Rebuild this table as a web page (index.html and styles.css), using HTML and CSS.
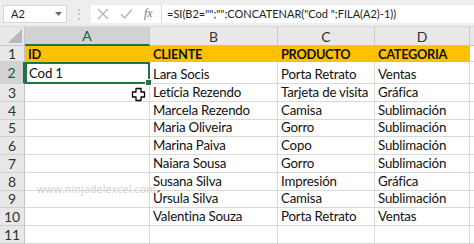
FILE: index.html
```html
<!DOCTYPE html>
<html>
<head>
<meta charset="utf-8">
<link rel="stylesheet" href="styles.css">
</head>
<body>
<div class="app">
  <div class="fbar">
    <div class="namebox"><span>A2</span><svg class="caret" width="7" height="4" viewBox="0 0 7 4"><path d="M0 0H7L3.5 4Z" fill="#6b6b6b"/></svg></div>
    <div class="dots">⋮</div>
    <div class="fbtns">
      <svg width="12" height="12" viewBox="0 0 12 12"><path d="M1 1L11 11M11 1L1 11" stroke="#b0b0b0" stroke-width="1.2" fill="none"/></svg>
      <svg width="13" height="12" viewBox="0 0 13 12"><path d="M1 6.5L4.5 10L12 1.5" stroke="#b0b0b0" stroke-width="1.2" fill="none"/></svg>
      <span class="fx">fx</span>
    </div>
    <div class="formula">=SI(B2="";"";CONCATENAR("Cod ";FILA(A2)-1))</div>
  </div>
  <div class="sheet">
    <div class="corner"><svg width="14" height="14" viewBox="0 0 14 14"><path d="M14 0V14H0Z" fill="#b8b8b8"/></svg></div>
    <div class="ch sel">A</div>
    <div class="ch">B</div>
    <div class="ch">C</div>
    <div class="ch">D</div>
    <div class="ch last"></div>

    <div class="rh">1</div>
    <div class="c hd">ID</div>
    <div class="c hd">CLIENTE</div>
    <div class="c hd">PRODUCTO</div>
    <div class="c hd">CATEGORIA</div>
    <div class="c"></div>

    <div class="rh rsel">2</div>
    <div class="c active">Cod 1</div>
    <div class="c">Lara Socis</div>
    <div class="c">Porta Retrato</div>
    <div class="c">Ventas</div>
    <div class="c"></div>

    <div class="rh">3</div>
    <div class="c"></div>
    <div class="c">Letícia Rezendo</div>
    <div class="c">Tarjeta de visita</div>
    <div class="c">Gráfica</div>
    <div class="c"></div>

    <div class="rh">4</div>
    <div class="c"></div>
    <div class="c">Marcela Rezendo</div>
    <div class="c">Camisa</div>
    <div class="c">Sublimación</div>
    <div class="c"></div>

    <div class="rh">5</div>
    <div class="c"></div>
    <div class="c">Maria Oliveira</div>
    <div class="c">Gorro</div>
    <div class="c">Sublimación</div>
    <div class="c"></div>

    <div class="rh">6</div>
    <div class="c"></div>
    <div class="c">Marina Paiva</div>
    <div class="c">Copo</div>
    <div class="c">Sublimación</div>
    <div class="c"></div>

    <div class="rh">7</div>
    <div class="c"></div>
    <div class="c">Naiara Sousa</div>
    <div class="c">Gorro</div>
    <div class="c">Sublimación</div>
    <div class="c"></div>

    <div class="rh">8</div>
    <div class="c"></div>
    <div class="c">Susana Silva</div>
    <div class="c">Impresión</div>
    <div class="c">Gráfica</div>
    <div class="c"></div>

    <div class="rh">9</div>
    <div class="c"></div>
    <div class="c">Úrsula Silva</div>
    <div class="c">Camisa</div>
    <div class="c">Sublimación</div>
    <div class="c"></div>

    <div class="rh">10</div>
    <div class="c"></div>
    <div class="c">Valentina Souza</div>
    <div class="c">Porta Retrato</div>
    <div class="c">Ventas</div>
    <div class="c"></div>

    <div class="rh">11</div>
    <div class="c"></div>
    <div class="c"></div>
    <div class="c"></div>
    <div class="c"></div>
    <div class="c"></div>

    <div class="watermark">www.ninjadelexcel.com</div>
    <svg class="cursor" width="15" height="15" viewBox="0 0 15 15"><path d="M5 1.5H10V5H13.5V10H10V13.5H5V10H1.5V5H5Z" fill="#fff" stroke="#000" stroke-width="1.3" stroke-linejoin="round"/></svg>
  </div>
</div>
</body>
</html>
```
FILE: styles.css
```css
* { box-sizing: border-box; }
html, body { margin: 0; padding: 0; background: #fff; }
body { font-family: Lato, "Liberation Sans", sans-serif; width: 474px; height: 244px; overflow: hidden; }
.app { width: 474px; height: 244px; overflow: hidden; }

.fbar {
  height: 27px;
  background: #eeeeee;
  display: flex;
  align-items: center;
  padding: 5px 0 4px 3px;
  border-bottom: 1px solid #dadada;
}
.namebox {
  width: 64px; height: 18px;
  background: #fff;
  border: 1px solid #d6d6d6;
  display: flex; align-items: center; justify-content: space-between;
  padding: 0 4px 0 7px;
  font-size: 11px; color: #222;
}
.dots { width: 20px; text-align: center; color: #b5b5b5; font-size: 12px; margin-left: 2px; }
.fbtns {
  height: 18px; width: 71px;
  background: #fff;
  display: flex; align-items: center; gap: 11px;
  padding-left: 6px;
  border-right: 1px solid #d6d6d6;
  margin-left: 2px;
}
.fx { font-family: "Liberation Serif", serif; font-style: italic; font-size: 12px; color: #777; }
.formula {
  flex: 1; height: 18px; background: #fff;
  display: flex; align-items: center;
  padding-left: 5px;
  font-size: 11px; color: #222; white-space: nowrap; overflow: hidden;
}

.sheet {
  position: relative;
  display: grid;
  grid-template-columns: 25px 125px 128px 97px 95px 1fr;
  grid-template-rows: 19px 16px 22px repeat(9, 17.75px);
}
.corner {
  background: #e8e8e8;
  border-right: 1px solid #c8c8c8;
  border-bottom: 1px solid #c8c8c8;
  display: flex; align-items: flex-end; justify-content: flex-end;
  padding: 0 2px 2px 0;
}
.ch {
  background: #e8e8e8;
  border-right: 1px solid #c9c9c9;
  border-bottom: 1px solid #c3c3c3;
  display: flex; align-items: center; justify-content: center;
  font-size: 14px; color: #333;
}
.ch.sel { background: #d2d2d2; color: #1f5c38; border-bottom: 2px solid #217346; }
.ch.last { border-right: none; }
.rh {
  background: #e8e8e8;
  border-right: 1px solid #c3c3c3;
  border-bottom: 1px solid #d0d0d0;
  display: flex; align-items: center; justify-content: center;
  font-size: 14px; color: #333;
}
.rh.rsel { background: #d2d2d2; color: #1f5c38; border-right: 2px solid #217346; }
.c {
  border-right: 1px solid #d9d9d9;
  border-bottom: 1px solid #d9d9d9;
  display: flex; align-items: flex-end;
  padding: 0 2px 0 3px;
  font-size: 13.3px; letter-spacing: -0.2px; color: #111;
  white-space: nowrap;
  line-height: 17px;
}
.c.hd { background: #ffc000; font-weight: bold; border-right: none; border-bottom: none; color: #111; font-size: 12.8px; letter-spacing: -0.3px; line-height: 15px; }
.c.active { position: relative; border: 2px solid #217346; padding-left: 2px; }
.c.active::after {
  content: ""; position: absolute; right: -4px; bottom: -4px;
  width: 5px; height: 5px; background: #217346; border: 1px solid #fff;
}
.watermark {
  position: absolute; left: 37px; top: 155px;
  font-size: 10.5px; color: #d0d0d0; letter-spacing: 0.2px;
  font-family: "Open Sans", sans-serif;
}
.cursor { position: absolute; left: 131px; top: 60px; }
```
